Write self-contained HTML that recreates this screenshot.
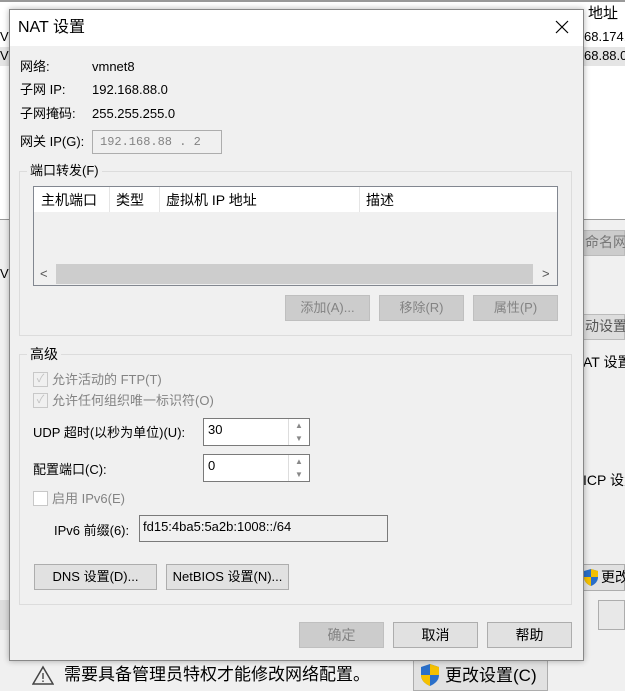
<!DOCTYPE html>
<html><head><meta charset="utf-8"><style>
*{box-sizing:border-box;margin:0;padding:0}
body{width:625px;height:691px;overflow:hidden;background:#f0f0f0;position:relative;font-family:"Liberation Sans","Noto Sans CJK SC",sans-serif;font-size:13px;color:#000}
.a{position:absolute;white-space:nowrap;line-height:18px}
.btn{position:absolute;background:#e1e1e1;border:1px solid #adadad;text-align:center;font-size:13px}
.dis{background:#cccccc;border-color:#bfbfbf;color:#838383}
.frame{position:absolute;border:1px solid #dcdcdc}
.lbl{position:absolute;background:#f0f0f0;padding:0 3px;line-height:18px}
.cb{position:absolute;width:15px;height:15px;border:1px solid #c8c8c8;background:#f0f0f0;color:#c0c0c0;font-size:11px;line-height:13px;text-align:center}
.inp{position:absolute;border:1px solid #7a7a7a;background:#fff}
</style></head><body>
<div class="a" style="left:0;top:0;width:625px;height:220px;background:#fff"></div>
<div class="a" style="left:0;top:0;width:625px;height:2px;background:#999"></div>
<div class="a" style="left:0;top:47px;width:625px;height:19px;background:#e5e5e5"></div>
<div class="a" style="left:0;top:219px;width:625px;height:1px;background:#999"></div>
<div class="a" style="left:588px;top:5px;font-size:15px">地址</div>
<div class="a" style="left:584px;top:28px;font-size:13px">68.174.</div>
<div class="a" style="left:584px;top:47px;font-size:13px">68.88.0</div>
<div class="a" style="left:0;top:28px">V</div><div class="a" style="left:0;top:47px">V</div>
<div class="a" style="left:0;top:265px">V</div>
<div class="a" style="left:583px;top:230px;width:42px;height:26px;background:#ccc;border:1px solid #bbb;color:#777;font-size:14px;padding:2px 0 0 1px">命名网</div>
<div class="a" style="left:583px;top:314px;width:42px;height:26px;background:#ddd;border:1px solid #bbb;color:#555;font-size:14px;padding:2px 0 0 1px">动设置</div>
<div class="a" style="left:583px;top:353px;font-size:14px">AT 设置</div>
<div class="a" style="left:583px;top:471px;font-size:14px">ICP 设置</div>
<div class="a" style="left:580px;top:564px;width:45px;height:27px;background:#e1e1e1;border:1px solid #adadad;font-size:14px;padding:3px 0 0 20px">更改</div>
<svg class="a" style="left:583px;top:568px" width="16" height="19"><path d="M8 1 L15 3 L15 9 Q15 15 8 18 Q1 15 1 9 L1 3 Z" fill="#2a6fc9"/><path d="M8 1 L15 3 L15 9 L8 9 Z" fill="#f5c000"/><path d="M1 9 L8 9 L8 18 Q1 15 1 9Z" fill="#f5c000"/></svg>
<div class="a" style="left:598px;top:600px;width:27px;height:30px;background:#e8e8e8;border:1px solid #adadad"></div>
<div class="a" style="left:0;top:600px;width:10px;height:30px;background:#ddd"></div>
<div class="a" style="left:0;top:661px;width:625px;height:30px;background:#f0f0f0"></div>
<svg class="a" style="left:32px;top:665px" width="22" height="20"><path d="M11 2 L21 19 L1 19 Z" fill="none" stroke="#444" stroke-width="1.5"/><rect x="10.3" y="8" width="1.4" height="6" fill="#444"/><rect x="10.3" y="15.5" width="1.4" height="1.5" fill="#444"/></svg>
<div class="a" style="left:64px;top:664px;font-size:17px;line-height:22px">需要具备管理员特权才能修改网络配置。</div>
<div class="a" style="left:413px;top:660px;width:135px;height:31px;background:#e1e1e1;border:1px solid #adadad;font-size:17px;line-height:22px;padding:4px 0 0 31px">更改设置(C)</div>
<svg class="a" style="left:419px;top:663px" width="22" height="24"><path d="M11 1 L20 4 L20 12 Q20 19 11 23 Q2 19 2 12 L2 4 Z" fill="#2a6fc9"/><path d="M11 1 L20 4 L20 12 L11 12 Z" fill="#f5c000"/><path d="M2 12 L11 12 L11 23 Q2 19 2 12Z" fill="#f5c000"/></svg>

<div class="a" style="left:9px;top:9px;width:575px;height:652px;background:#f0f0f0;border:1px solid #888;box-shadow:0 0 6px rgba(0,0,0,.3)"></div>
<div class="a" style="left:10px;top:10px;width:573px;height:36px;background:#fff"></div>
<div class="a" style="left:18px;top:19px;font-size:16px">NAT 设置</div>
<svg class="a" style="left:555px;top:20px" width="14" height="14"><path d="M1 1L13 13M13 1L1 13" stroke="#000" stroke-width="1.2"/></svg>

<div class="a" style="left:20px;top:58px">网络:</div><div class="a" style="left:92px;top:58px">vmnet8</div>
<div class="a" style="left:20px;top:81px">子网 IP:</div><div class="a" style="left:92px;top:81px">192.168.88.0</div>
<div class="a" style="left:20px;top:105px">子网掩码:</div><div class="a" style="left:92px;top:105px">255.255.255.0</div>
<div class="a" style="left:20px;top:133px">网关 IP(G):</div>
<div class="a" style="left:92px;top:130px;width:130px;height:24px;border:1px solid #adadad;background:#f0f0f0;color:#838383;font-family:'Liberation Mono',monospace;font-size:12px;padding:2px 0 0 7px">192.168.88 . 2</div>

<div class="frame" style="left:19px;top:171px;width:553px;height:165px"></div>
<div class="lbl" style="left:27px;top:162px">端口转发(F)</div>
<div class="a" style="left:33px;top:186px;width:525px;height:100px;border:1px solid #828790;background:#f0f0f0"></div>
<div class="a" style="left:34px;top:187px;width:523px;height:25px;background:#fff"></div>
<div class="a" style="left:109px;top:187px;width:1px;height:25px;background:#e5e5e5"></div>
<div class="a" style="left:159px;top:187px;width:1px;height:25px;background:#e5e5e5"></div>
<div class="a" style="left:359px;top:187px;width:1px;height:25px;background:#e5e5e5"></div>
<div class="a" style="left:41px;top:191px;font-size:14px">主机端口</div>
<div class="a" style="left:116px;top:191px;font-size:14px">类型</div>
<div class="a" style="left:166px;top:191px;font-size:14px">虚拟机 IP 地址</div>
<div class="a" style="left:366px;top:191px;font-size:14px">描述</div>
<div class="a" style="left:34px;top:263px;width:523px;height:22px;background:#f0f0f0"></div>
<div class="a" style="left:56px;top:264px;width:477px;height:20px;background:#cdcdcd"></div>
<div class="a" style="left:40px;top:265px;font-size:13px;color:#555">&lt;</div>
<div class="a" style="left:542px;top:265px;font-size:13px;color:#555">&gt;</div>
<div class="btn dis" style="left:285px;top:295px;width:85px;height:26px;line-height:24px">添加(A)...</div>
<div class="btn dis" style="left:379px;top:295px;width:85px;height:26px;line-height:24px">移除(R)</div>
<div class="btn dis" style="left:473px;top:295px;width:85px;height:26px;line-height:24px">属性(P)</div>

<div class="frame" style="left:19px;top:354px;width:553px;height:251px"></div>
<div class="lbl" style="left:27px;top:345px;font-size:14px">高级</div>
<div class="cb" style="left:33px;top:372px">✓</div><div class="a" style="left:52px;top:371px;color:#838383">允许活动的 FTP(T)</div>
<div class="cb" style="left:33px;top:393px">✓</div><div class="a" style="left:52px;top:392px;color:#838383">允许任何组织唯一标识符(O)</div>
<div class="a" style="left:33px;top:424px">UDP 超时(以秒为单位)(U):</div>
<div class="inp" style="left:203px;top:418px;width:107px;height:28px;padding:2px 0 0 4px;line-height:18px">30</div>
<div class="a" style="left:288px;top:419px;width:21px;height:26px;border-left:1px solid #ddd;color:#888;font-size:8px;text-align:center;line-height:13px">▲<br>▼</div>
<div class="a" style="left:33px;top:461px">配置端口(C):</div>
<div class="inp" style="left:203px;top:454px;width:107px;height:28px;padding:2px 0 0 4px;line-height:18px">0</div>
<div class="a" style="left:288px;top:455px;width:21px;height:26px;border-left:1px solid #ddd;color:#888;font-size:8px;text-align:center;line-height:13px">▲<br>▼</div>
<div class="cb" style="left:33px;top:491px;background:#fff"></div><div class="a" style="left:52px;top:490px;color:#838383">启用 IPv6(E)</div>
<div class="a" style="left:54px;top:522px">IPv6 前缀(6):</div>
<div class="inp" style="left:139px;top:515px;width:249px;height:27px;padding:2px 0 0 3px;background:#f0f0f0;line-height:18px">fd15:4ba5:5a2b:1008::/64</div>
<div class="btn" style="left:34px;top:564px;width:123px;height:26px;line-height:24px">DNS 设置(D)...</div>
<div class="btn" style="left:166px;top:564px;width:123px;height:26px;line-height:24px">NetBIOS 设置(N)...</div>

<div class="btn dis" style="left:299px;top:622px;width:85px;height:26px;line-height:24px;font-size:14px">确定</div>
<div class="btn" style="left:393px;top:622px;width:85px;height:26px;line-height:24px;font-size:14px">取消</div>
<div class="btn" style="left:487px;top:622px;width:85px;height:26px;line-height:24px;font-size:14px">帮助</div>
</body></html>
